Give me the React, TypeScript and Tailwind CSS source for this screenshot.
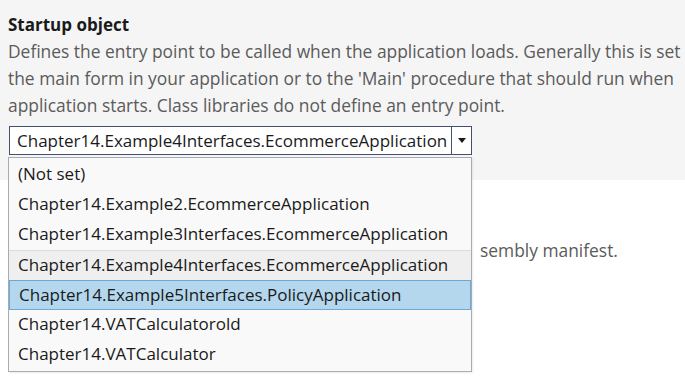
import React from "react";

const items = [
  "(Not set)",
  "Chapter14.Example2.EcommerceApplication",
  "Chapter14.Example3Interfaces.EcommerceApplication",
  "Chapter14.Example4Interfaces.EcommerceApplication",
  "Chapter14.Example5Interfaces.PolicyApplication",
  "Chapter14.VATCalculatorold",
  "Chapter14.VATCalculator",
];

export default function App() {
  return (
    <div
      className="relative w-[685px] h-[379px] overflow-hidden bg-white"
      style={{ fontFamily: '"Open Sans", "Noto Sans", sans-serif' }}
    >
      <div className="bg-[#f5f5f5] pl-[8px] pt-[13px] pb-[25px]">
        <div className="text-[17px] leading-[24px] font-bold text-[#1a1a1a]">Startup object</div>
        <div className="mt-[1px] text-[17.4px] leading-[27px] text-[#5b5b5b] whitespace-nowrap">
          <div>Defines the entry point to be called when the application loads. Generally this is set</div>
          <div>the main form in your application or to the 'Main' procedure that should run when</div>
          <div>application starts. Class libraries do not define an entry point.</div>
        </div>
        <div className="mt-[7px] ml-[1px] flex w-[463px] h-[29px] border border-[#44506e] bg-white">
          <div className="flex-1 pl-[7px] text-[17px] leading-[27px] text-[#1a1a1a] whitespace-nowrap overflow-hidden">
            Chapter14.Example4Interfaces.EcommerceApplication
          </div>
          <div className="w-[20px] border-l border-[#44506e] flex items-center justify-center">
            <svg width="8" height="5" viewBox="0 0 8 5">
              <path d="M0 0 L8 0 L4 5 Z" fill="#1a1a1a" />
            </svg>
          </div>
        </div>
      </div>
      <div className="pl-[480px] pt-[57px] text-[17.4px] leading-[27px] text-[#5b5b5b] whitespace-nowrap">
        sembly manifest.
      </div>
      <div className="absolute left-[8px] top-[157px] w-[464px] border border-[#a8aab4] bg-[#f9f9f9] pt-[2px] pb-[1px] shadow-[1px_1px_2px_rgba(0,0,0,0.08)]">
        {items.map((t, i) => (
          <div
            key={t}
            className={
              "h-[30px] pl-[9px] text-[17px] leading-[28px] text-[#1a1a1a] whitespace-nowrap " +
              (i === 4
                ? "bg-[#b4d7ee] border border-[#6aa9d9]"
                : i === 3
                ? "bg-[#efefef] border-t border-[#dcdcdc]"
                : "")
            }
          >
            {t}
          </div>
        ))}
      </div>
    </div>
  );
}
